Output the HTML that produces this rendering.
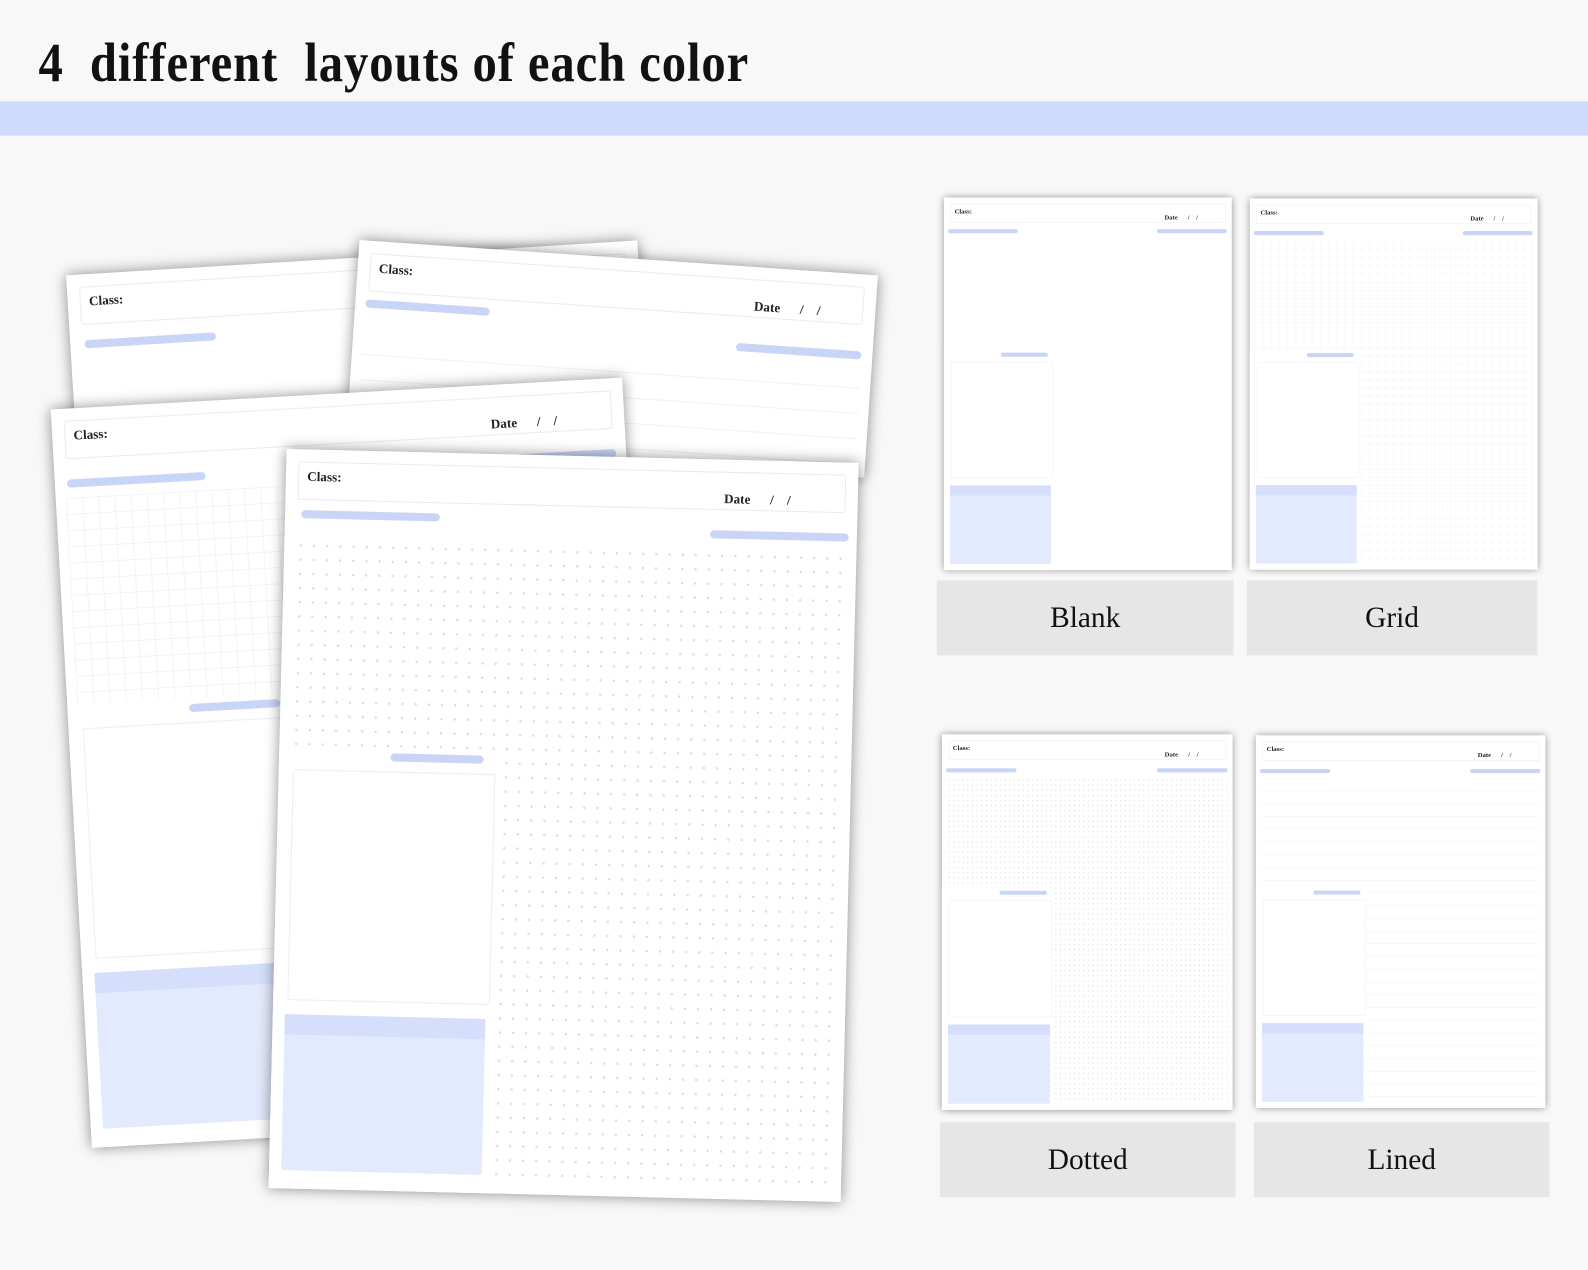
<!DOCTYPE html>
<html><head><meta charset="utf-8">
<style>
body{margin:0;width:1588px;height:1270px;background:#f8f8f8;position:relative;overflow:hidden;font-family:"Liberation Serif",serif}
#w{position:absolute;left:0;top:0;width:1568px;height:1254px;transform:scale(1.0128);transform-origin:0 0}
.title{position:absolute;left:38px;top:30px;font-size:54px;line-height:64px;color:#111;white-space:pre;transform:scaleX(0.89);transform-origin:0 0;font-weight:bold;letter-spacing:1px}
.band{position:absolute;left:0;top:100px;width:1568px;height:34px;background:#cfdbfb}
.page{position:absolute;width:565px;height:730px;background:#fff;box-shadow:0 0 14px rgba(0,0,0,.45)}
.hdr{position:absolute;left:12px;top:12px;width:539px;height:36px;border:1px solid #e8ebf3;border-radius:3px}
.cls{position:absolute;left:8px;top:6px;font-weight:bold;font-size:13px;color:#222}
.dt{position:absolute;left:420px;top:18px;font-weight:bold;font-size:13px;color:#222;white-space:pre}
.bar{position:absolute;height:8px;border-radius:4px;background:#c9d5f7}
.pat{position:absolute;left:10px;top:88px;width:545px;height:630px}
.grid{background-image:linear-gradient(#f1f3f8 1px,transparent 1px),linear-gradient(90deg,#f1f3f8 1px,transparent 1px);background-size:16px 16px}
.dots{background-image:radial-gradient(circle,#d9dbe0 1px,transparent 1.4px);background-size:13px 14px}
.lined{background-image:repeating-linear-gradient(#fff 0,#fff 24px,#f0f1f4 24px,#f0f1f4 25px)}
.col{position:absolute;left:0;top:292px;width:218px;height:438px;background:#fff}
.box{position:absolute;left:14px;top:24px;width:198px;height:226px;border:1px solid #eceef4;border-radius:3px}
.blk{position:absolute;left:12px;top:266px;width:198px;height:154px;background:#e4eafd;border-radius:2px}
.blk:before{content:"";position:absolute;left:0;top:0;right:0;height:20px;background:#d5dffb}
.thumb{position:absolute;width:565px;height:730px;transform-origin:0 0}
.thumb .col{top:298px;height:432px}
.lbl{position:absolute;height:74px;background:#e6e6e6;font-size:29px;text-align:center;line-height:74px;color:#111}
</style></head><body>
<div id="w">
<div class="title">4  different  layouts of each color</div>
<div class="band"></div>

<div class="page" style="left:87px;top:254px;transform:rotate(-3.5deg)">
 <div class="hdr"><div class="cls">Class:</div><div class="dt">Date      /    /</div></div>
 <div class="bar" style="left:14px;top:65px;width:130px"></div>
 <div class="bar" style="left:418px;top:74px;width:137px"></div>
</div>
<div class="page" style="left:355px;top:237px;width:513px;height:200px;transform:rotate(3.9deg);transform-origin:0 0;overflow:hidden">
 <div class="hdr" style="width:487px"><div class="cls">Class:</div><div class="dt" style="left:380px">Date      /    /</div></div>
 <div class="bar" style="left:10px;top:58px;width:123px"></div>
 <div class="bar" style="left:378px;top:76px;width:124px"></div>
 <div class="pat lined" style="width:493px"></div>
</div>
<div class="page" style="left:70px;top:388px;transform:rotate(-3.2deg)">
 <div class="hdr"><div class="cls">Class:</div><div class="dt">Date      /    /</div></div>
 <div class="bar" style="left:12px;top:70px;width:137px"></div>
 <div class="bar" style="left:418px;top:70px;width:137px"></div>
 <div class="pat grid"></div>
 <div class="col"><div class="bar" style="left:120px;top:6px;width:90px"></div><div class="box"></div><div class="blk"></div></div>
</div>
<div class="page" style="left:274px;top:450px;transform:rotate(1.4deg)">
 <div class="hdr"><div class="cls">Class:</div><div class="dt">Date      /    /</div></div>
 <div class="bar" style="left:16px;top:60px;width:137px"></div>
 <div class="bar" style="left:420px;top:70px;width:137px"></div>
 <div class="pat dots"></div>
 <div class="col"><div class="bar" style="left:110px;top:6px;width:92px"></div><div class="box"></div><div class="blk"></div></div>
</div>

<div class="page thumb" style="left:932px;top:195px;transform:scale(0.503,0.504)">
 <div class="hdr"><div class="cls">Class:</div><div class="dt">Date      /    /</div></div>
 <div class="bar" style="left:8px;top:62px;width:137px"></div>
 <div class="bar" style="left:418px;top:62px;width:137px"></div>
 <div class="col"><div class="bar" style="left:112px;top:6px;width:92px"></div><div class="box"></div><div class="blk"></div></div>
</div>
<div class="page thumb" style="left:1234px;top:196px;transform:scale(0.503,0.502)">
 <div class="hdr"><div class="cls">Class:</div><div class="dt">Date      /    /</div></div>
 <div class="bar" style="left:8px;top:64px;width:137px"></div>
 <div class="bar" style="left:418px;top:64px;width:137px"></div>
 <div class="pat grid" style="top:84px"></div>
 <div class="col"><div class="bar" style="left:112px;top:6px;width:92px"></div><div class="box"></div><div class="blk"></div></div>
</div>
<div class="page thumb" style="left:930px;top:725px;transform:scale(0.508,0.508)">
 <div class="hdr"><div class="cls">Class:</div><div class="dt">Date      /    /</div></div>
 <div class="bar" style="left:8px;top:66px;width:137px"></div>
 <div class="bar" style="left:418px;top:66px;width:137px"></div>
 <div class="pat dots" style="top:84px;background-size:9px 10px"></div>
 <div class="col"><div class="bar" style="left:112px;top:6px;width:92px"></div><div class="box"></div><div class="blk"></div></div>
</div>
<div class="page thumb" style="left:1240px;top:726px;transform:scale(0.506,0.504)">
 <div class="hdr"><div class="cls">Class:</div><div class="dt">Date      /    /</div></div>
 <div class="bar" style="left:8px;top:66px;width:137px"></div>
 <div class="bar" style="left:418px;top:66px;width:137px"></div>
 <div class="pat lined" style="top:84px"></div>
 <div class="col"><div class="bar" style="left:112px;top:6px;width:92px"></div><div class="box"></div><div class="blk"></div></div>
</div>

<div class="lbl" style="left:925px;top:573px;width:293px">Blank</div>
<div class="lbl" style="left:1231px;top:573px;width:287px">Grid</div>
<div class="lbl" style="left:928px;top:1108px;width:292px">Dotted</div>
<div class="lbl" style="left:1238px;top:1108px;width:292px">Lined</div>
</div>
</body></html>
